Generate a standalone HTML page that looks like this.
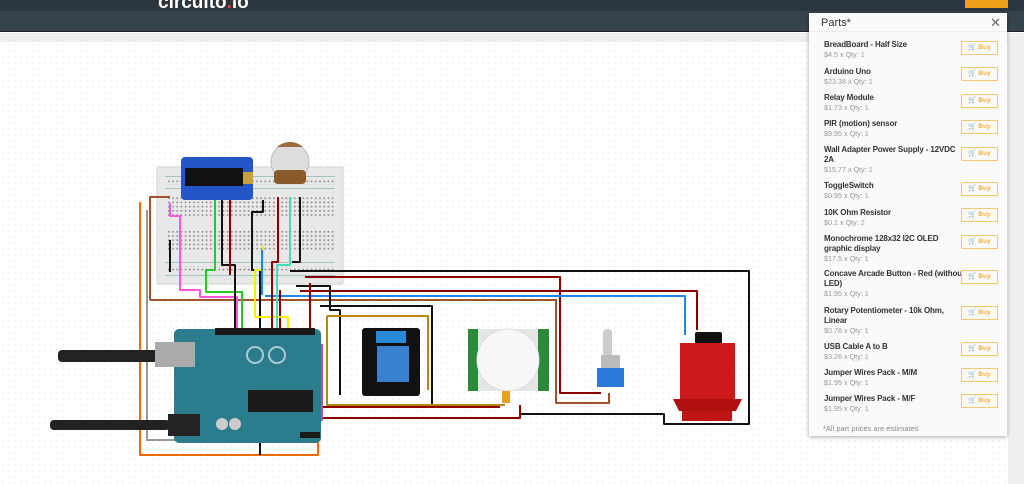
<!DOCTYPE html>
<html><head><meta charset="utf-8"><style>
*{margin:0;padding:0;box-sizing:border-box}
body{width:1024px;height:484px;overflow:hidden;font-family:"Liberation Sans",Arial,sans-serif;background:#fff;position:relative}
.top{position:absolute;left:0;top:0;width:1024px;height:11px;background:#2b353d}
.nav{position:absolute;left:0;top:11px;width:1024px;height:21px;background:#37434b;border-bottom:1px solid #222}
.bar{position:absolute;left:0;top:33px;width:1024px;height:9px;background:#eee}
.canvas{position:absolute;left:0;top:42px;width:1008px;height:442px;background-color:#fff;background-image:radial-gradient(#ddd 0.6px,transparent 0.8px);background-size:6px 6px}
.scroll{position:absolute;left:1008px;top:42px;width:16px;height:442px;background:#eee}
.logo{position:absolute;left:158px;top:-8px;color:#fff;font-weight:bold;font-size:19px}
.logo b{color:#e53935}
.pbtn{position:absolute;left:965px;top:0;width:43px;height:8px;background:#f0a11a}
.panel{position:absolute;left:809px;top:13px;width:198px;height:423px;background:#fafafa;box-shadow:0 1px 4px rgba(0,0,0,.35)}
.ph{height:19px;border-bottom:1px solid #eee;font-size:11px;color:#333;padding:4px 0 0 12px}
.x{position:absolute;right:6px;top:2px;font-size:13px;color:#666}
.it{position:absolute;left:15px;width:142px;font-size:8px;font-weight:bold;letter-spacing:-0.15px;color:#333;line-height:10px}
.it s{text-decoration:none;display:block;color:#999;font-weight:normal;letter-spacing:0;font-size:7.2px;line-height:9px}
.buy{position:absolute;left:152px;width:37px;height:14px;border:1px solid #f5c775;border-radius:1px;color:#f0b040;font-size:6.5px;font-weight:bold;text-align:center;line-height:12px;background:#fafafa}
.note{position:absolute;left:14px;top:411px;font-size:7.5px;color:#888}
</style></head><body>
<div class="top"><div class="logo">circuito<b>.</b>io</div><div class="pbtn"></div></div>
<div class="nav"></div><div class="bar"></div>
<div class="canvas"></div><div class="scroll"></div>
<svg style="position:absolute;left:0;top:0" width="1008" height="484">
<defs><pattern id="holes" width="4.2" height="4.2" patternUnits="userSpaceOnUse"><rect width="1.6" height="1.6" fill="#888"/></pattern></defs>
<rect x="157" y="167" width="186" height="117" fill="#e8e8e8" stroke="#d4d4d4"/>
<g fill="#7aa" opacity=".6"><rect x="165" y="176" width="170" height="1"/><rect x="165" y="188" width="170" height="1"/><rect x="165" y="262" width="170" height="1"/><rect x="165" y="275" width="170" height="1"/></g>
<rect x="168" y="180" width="166" height="5" fill="url(#holes)"/>
<rect x="168" y="196" width="166" height="22" fill="url(#holes)"/>
<rect x="168" y="230" width="166" height="22" fill="url(#holes)"/>
<rect x="168" y="266" width="166" height="5" fill="url(#holes)"/>
<g fill="none" stroke-width="2" stroke-linejoin="round">
<path d="M290 271H749V424H664V414H520" stroke="#111"/>
<path d="M305 277H560V393H601" stroke="#8b0000"/>
<path d="M265 296H685V335" stroke="#1e88e5"/>
<path d="M300 291H697V330" stroke="#8b0000"/>
<path d="M150 300H556V403H609V393" stroke="#a0522d"/>
<path d="M320 306H432V405H355" stroke="#111"/>
<path d="M150 300V197H170" stroke="#a0522d"/>
<path d="M296 286H330V310H340V395" stroke="#111"/>
<path d="M310 283V407H500" stroke="#8b0000"/>
<path d="M280 290V418H520V405" stroke="#8b0000"/>
<path d="M327 316H428V390" stroke="#b8860b"/>
<path d="M327 316V405H505" stroke="#b8860b"/>
<path d="M140 202V455H318V432H305" stroke="#ef6c00"/>
<path d="M147 210V440H310V420" stroke="#999"/>
<path d="M170 203V216H180V290H200V297H237V334" stroke="#ff55dd"/>
<path d="M290 335H305V345H322V420H300" stroke="#b050c0"/>
<path d="M215 196V270H206V292H242V330" stroke="#22cc22"/>
<path d="M222 196V265H235V330" stroke="#111"/>
<path d="M230 196V275" stroke="#8b0000"/>
<path d="M263 200V212H252V270H260V455" stroke="#111"/>
<path d="M263 245V270H255V317H288V335" stroke="#ffee00"/>
<path d="M262 250V295" stroke="#1e88e5"/>
<path d="M278 197V262H272V432" stroke="#8b0000"/>
<path d="M290 197V265H277V438H300" stroke="#44ddbb"/>
<path d="M300 197V262H292" stroke="#111"/>
<path d="M170 240V272" stroke="#111"/>
</g>
<rect x="181" y="157" width="72" height="43" rx="4" fill="#2456c8"/>
<rect x="185" y="168" width="58" height="18" fill="#111"/>
<rect x="243" y="172" width="10" height="12" fill="#c8a040"/>
<circle cx="290" cy="162" r="19" fill="#ddd" stroke="#bbb"/>
<path d="M277 147a19 19 0 0 1 26 0z" fill="#9a6a3a"/>
<rect x="274" y="170" width="32" height="14" rx="4" fill="#8b5a2b"/>
<rect x="174" y="329" width="147" height="114" rx="5" fill="#2b7d8e"/>
<rect x="215" y="328" width="100" height="7" fill="#1a1a1a"/>
<rect x="300" y="432" width="20" height="6" fill="#1a1a1a"/>
<rect x="248" y="390" width="65" height="22" fill="#1a1a1a"/>
<circle cx="255" cy="355" r="8" fill="none" stroke="#fff" stroke-width="2" opacity=".6"/>
<circle cx="277" cy="355" r="8" fill="none" stroke="#fff" stroke-width="2" opacity=".6"/>
<circle cx="235" cy="424" r="6" fill="#ccc"/><circle cx="222" cy="424" r="6" fill="#ccc"/>
<rect x="58" y="350" width="100" height="12" rx="4" fill="#222"/>
<rect x="155" y="342" width="40" height="25" fill="#aaa"/>
<rect x="50" y="420" width="120" height="10" rx="4" fill="#222"/>
<rect x="168" y="414" width="32" height="22" fill="#222"/>
<rect x="362" y="328" width="58" height="68" rx="3" fill="#111"/>
<rect x="376" y="331" width="30" height="12" fill="#2b8ad8"/>
<rect x="377" y="346" width="32" height="36" fill="#3a80d0"/>
<rect x="468" y="329" width="81" height="62" fill="#2a8a3a"/>
<rect x="478" y="329" width="60" height="62" fill="#e5e5e5"/>
<circle cx="508" cy="360" r="31" fill="#f7f7f7" stroke="#ddd"/>
<rect x="502" y="391" width="8" height="12" fill="#e8a020"/>
<rect x="603" y="329" width="9" height="28" rx="4" fill="#ccc"/>
<rect x="601" y="355" width="19" height="15" fill="#bbb"/>
<rect x="597" y="368" width="27" height="19" fill="#2a7ad8"/>
<rect x="695" y="332" width="27" height="13" rx="2" fill="#111"/>
<rect x="680" y="343" width="55" height="60" fill="#cc1a1a"/>
<path d="M673 399h69l-6 12h-57z" fill="#b01010"/>
<rect x="682" y="411" width="50" height="10" fill="#c01515"/>
</svg>
<div class="panel">
<div class="ph">Parts*</div><div class="x">✕</div>
<div class="it" style="top:27px">BreadBoard - Half Size<s>$4.5 x Qty: 1</s></div><div class="buy" style="top:28px">🛒 Buy</div>
<div class="it" style="top:54px">Arduino Uno<s>$23.38 x Qty: 1</s></div><div class="buy" style="top:54px">🛒 Buy</div>
<div class="it" style="top:80px">Relay Module<s>$1.73 x Qty: 1</s></div><div class="buy" style="top:81px">🛒 Buy</div>
<div class="it" style="top:106px">PIR (motion) sensor<s>$9.95 x Qty: 1</s></div><div class="buy" style="top:107px">🛒 Buy</div>
<div class="it" style="top:132px">Wall Adapter Power Supply - 12VDC 2A<s>$15.77 x Qty: 1</s></div><div class="buy" style="top:134px">🛒 Buy</div>
<div class="it" style="top:168px">ToggleSwitch<s>$0.95 x Qty: 1</s></div><div class="buy" style="top:169px">🛒 Buy</div>
<div class="it" style="top:195px">10K Ohm Resistor<s>$0.1 x Qty: 2</s></div><div class="buy" style="top:195px">🛒 Buy</div>
<div class="it" style="top:221px">Monochrome 128x32 I2C OLED graphic display<s>$17.5 x Qty: 1</s></div><div class="buy" style="top:222px">🛒 Buy</div>
<div class="it" style="top:256px">Concave Arcade Button - Red (without LED)<s>$1.95 x Qty: 1</s></div><div class="buy" style="top:257px">🛒 Buy</div>
<div class="it" style="top:293px">Rotary Potentiometer - 10k Ohm, Linear<s>$0.76 x Qty: 1</s></div><div class="buy" style="top:293px">🛒 Buy</div>
<div class="it" style="top:329px">USB Cable A to B<s>$3.26 x Qty: 1</s></div><div class="buy" style="top:329px">🛒 Buy</div>
<div class="it" style="top:355px">Jumper Wires Pack - M/M<s>$1.95 x Qty: 1</s></div><div class="buy" style="top:355px">🛒 Buy</div>
<div class="it" style="top:381px">Jumper Wires Pack - M/F<s>$1.95 x Qty: 1</s></div><div class="buy" style="top:381px">🛒 Buy</div>
<div class="note">*All part prices are estimates</div>
</div>
</body></html>
